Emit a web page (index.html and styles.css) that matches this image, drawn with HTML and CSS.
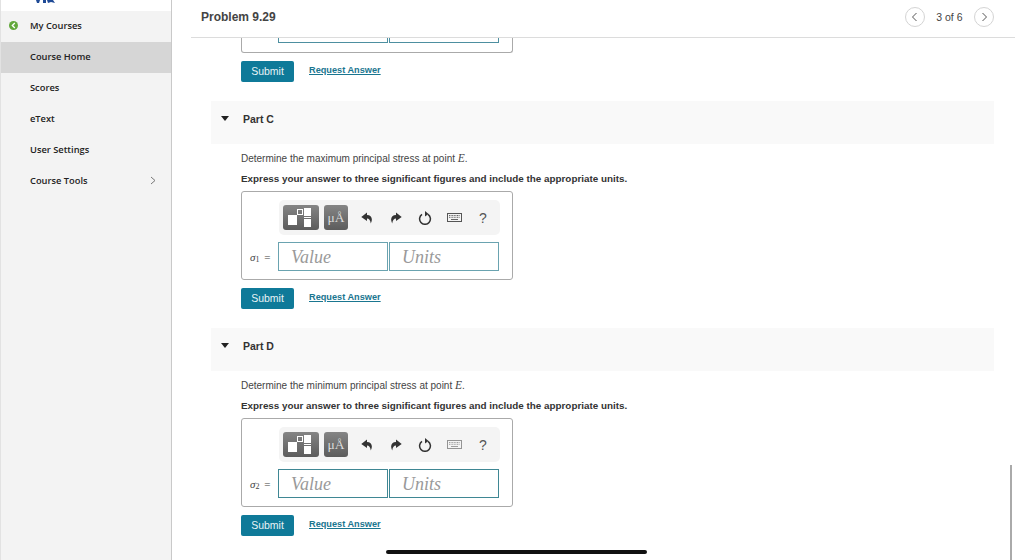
FILE: index.html
```html
<!DOCTYPE html>
<html lang="en">
  <head>
    <meta charset="UTF-8" />
    <meta name="viewport" content="width=device-width, initial-scale=1.0" />
    <title>Problem 9.29</title>
    <link rel="stylesheet" href="styles.css">
  </head>
  <body>
    <svg class="sprite" width="0" height="0">
      <symbol id="undo" viewBox="0 0 12 12">
        <path d="M6 0.5 L0.3 5 L6 9 V6.6 C8 6.6 9.3 8 9.8 11.5 C12.2 6.8 10.4 3.2 6 3.1 Z" />
      </symbol>
      <symbol id="reset" viewBox="0 0 14 14">
        <path d="M4 3.4 A5.4 5.4 0 1 0 10 3.4" fill="none" stroke="#333" stroke-width="1.5" />
        <path d="M7 0 V5.6 L10.6 3 Z" fill="#333" />
      </symbol>
      <symbol id="keyboard" viewBox="0 0 15 9">
        <rect x="0.5" y="0.5" width="14" height="8" fill="#f4f4f4" stroke="#555" />
        <path d="M2 2.5 H13 M2 4.3 H13" stroke="#666" stroke-dasharray="1 0.6" />
        <path d="M4 6.5 H11" stroke="#666" />
      </symbol>
      <symbol id="templates" viewBox="0 0 36 25">
        <rect x="5" y="10" width="9" height="10" fill="#fff" />
        <rect x="14.5" y="4.5" width="5" height="5" fill="none" stroke="#fff" />
        <rect x="21" y="3" width="7" height="8" fill="#fff" />
        <rect x="21" y="12" width="7" height="1" fill="#fff" />
        <rect x="21" y="14" width="7" height="8" fill="#fff" />
      </symbol>
    </svg>

    <div class="app">
      <aside class="sidebar">
        <div class="logo">
          <svg width="24" height="4" viewBox="0 0 24 4">
            <path d="M1 0 L5 0 L4 3 L2 3 Z M8 0 H11 V3 H8 Z M12 0 L18 0 L20 3 L16 2 L13 3 Z" fill="#1f4a96" />
          </svg>
        </div>
        <ul class="nav">
          <li class="nav-back">
            <span class="back-dot">
              <svg width="6" height="8" viewBox="0 0 6 8"><path d="M4.6 1 L1.6 4 L4.6 7" fill="none" stroke="#fff" stroke-width="1.6" /></svg>
            </span>
            <a href="#">My Courses</a>
          </li>
          <li class="active"><a href="#">Course Home</a></li>
          <li><a href="#">Scores</a></li>
          <li><a href="#">eText</a></li>
          <li><a href="#">User Settings</a></li>
          <li>
            <a href="#">Course Tools</a>
            <svg class="chevron" width="6" height="9" viewBox="0 0 6 9"><path d="M1 1 L5 4.5 L1 8" fill="none" stroke="#777" /></svg>
          </li>
        </ul>
      </aside>

      <main class="main">
        <header class="topbar">
          <h2>Problem 9.29</h2>
          <div class="pager">
            <span class="pager-btn">
              <svg width="7" height="10" viewBox="0 0 7 10"><path d="M5.5 1 L1.5 5 L5.5 9" fill="none" stroke="#555" /></svg>
            </span>
            <span class="pager-text">3 of 6</span>
            <span class="pager-btn">
              <svg width="7" height="10" viewBox="0 0 7 10"><path d="M1.5 1 L5.5 5 L1.5 9" fill="none" stroke="#555" /></svg>
            </span>
          </div>
        </header>

        <div class="content">
          <div class="answer-stub">
            <div class="field stub-field"></div>
            <div class="field stub-field"></div>
          </div>
          <div class="actions">
            <button class="submit">Submit</button>
            <a class="request" href="#">Request Answer</a>
          </div>

          <section class="part">
            <div class="part-head"><span class="caret"></span><h3>Part C</h3></div>
            <p class="question">Determine the maximum principal stress at point <i>E</i>.</p>
            <p class="instruction">Express your answer to three significant figures and include the appropriate units.</p>
            <div class="answer">
              <div class="toolbar">
                <span class="tool-btn tool-templates"><svg width="36" height="25"><use href="#templates" /></svg></span>
                <span class="tool-btn tool-symbols">μÅ</span>
                <svg class="tool undo" width="12" height="12"><use href="#undo" /></svg>
                <svg class="tool redo" width="12" height="12"><use href="#undo" /></svg>
                <svg class="tool reset" width="14" height="14"><use href="#reset" /></svg>
                <svg class="tool kbd" width="15" height="9"><use href="#keyboard" /></svg>
                <span class="tool help">?</span>
              </div>
              <div class="answer-row">
                <span class="symbol"><i>σ</i><sub>1</sub> =</span>
                <div class="field"><span class="placeholder">Value</span></div>
                <div class="field"><span class="placeholder">Units</span></div>
              </div>
            </div>
            <div class="actions">
              <button class="submit">Submit</button>
              <a class="request" href="#">Request Answer</a>
            </div>
          </section>

          <section class="part">
            <div class="part-head"><span class="caret"></span><h3>Part D</h3></div>
            <p class="question">Determine the minimum principal stress at point <i>E</i>.</p>
            <p class="instruction">Express your answer to three significant figures and include the appropriate units.</p>
            <div class="answer">
              <div class="toolbar">
                <span class="tool-btn tool-templates"><svg width="36" height="25"><use href="#templates" /></svg></span>
                <span class="tool-btn tool-symbols">μÅ</span>
                <svg class="tool undo" width="12" height="12"><use href="#undo" /></svg>
                <svg class="tool redo" width="12" height="12"><use href="#undo" /></svg>
                <svg class="tool reset" width="14" height="14"><use href="#reset" /></svg>
                <svg class="tool kbd faded" width="15" height="9"><use href="#keyboard" /></svg>
                <span class="tool help">?</span>
              </div>
              <div class="answer-row">
                <span class="symbol"><i>σ</i><sub>2</sub> =</span>
                <div class="field dark"><span class="placeholder">Value</span></div>
                <div class="field dark"><span class="placeholder">Units</span></div>
              </div>
            </div>
            <div class="actions">
              <button class="submit">Submit</button>
              <a class="request" href="#">Request Answer</a>
            </div>
          </section>
        </div>
      </main>
    </div>

    <div class="scroll-thumb"></div>
    <div class="home-bar"></div>
  </body>
</html>
```

FILE: styles.css
```css
* {
  margin: 0;
  padding: 0;
  box-sizing: border-box;
  list-style: none;
  text-decoration: none;
}
html,
body {
  height: 560px;
  overflow: hidden;
  background: #fff;
}
body {
  font-family: "Liberation Sans", Arial, sans-serif;
  color: #333;
}
.sprite {
  position: absolute;
}
.app {
  display: flex;
  height: 560px;
}

/* sidebar */
.sidebar {
  width: 172px;
  flex: none;
  background: #f3f3f3;
  border-right: 1px solid #c9c9c9;
  border-left: 1px solid #e2e2e2;
  font-family: "Open Sans", sans-serif;
  font-size: 9.3px;
  font-weight: 600;
}
.logo {
  height: 11px;
  background: #fff;
  padding-left: 34px;
  line-height: 0;
}
.nav li {
  height: 31px;
  display: flex;
  align-items: center;
  padding: 0 0 2px 29px;
  position: relative;
}
.nav a {
  color: #222;
}
.nav .active {
  background: #d6d6d6;
}
.back-dot {
  position: absolute;
  left: 8px;
  top: 10px;
  width: 9px;
  height: 9px;
  border-radius: 50%;
  background: #63a83c;
  display: flex;
  align-items: center;
  justify-content: center;
}
.back-dot svg {
  width: 5px;
  height: 7px;
}
.chevron {
  position: absolute;
  right: 15px;
  top: 10px;
}

/* main column */
.main {
  flex: 1;
  min-width: 0;
  padding: 0 9px 0 19px;
}
.topbar {
  height: 38px;
  border-bottom: 1px solid #dcdcdc;
  display: flex;
  align-items: center;
  justify-content: space-between;
  padding: 0 21px 4px 10px;
}
.topbar h2 {
  font-size: 12px;
  font-weight: bold;
  color: #444;
}
.pager {
  display: flex;
  align-items: center;
  gap: 11.5px;
}
.pager-btn {
  width: 20px;
  height: 20px;
  border: 1px solid #d4d4d4;
  border-radius: 50%;
  display: flex;
  align-items: center;
  justify-content: center;
}
.pager-text {
  font-size: 10.5px;
  color: #444;
}

.content {
  padding-left: 20px;
  padding-right: 21px;
}
.content > .answer-stub,
.content > .actions {
  margin-left: 30px;
}
.answer-stub {
  width: 272px;
  height: 15px;
  border: 1px solid #aaa;
  border-top: 0;
  border-radius: 0 0 3px 3px;
  display: flex;
  gap: 1px;
  padding-left: 36px;
}
.field {
  width: 110px;
  height: 29px;
  border: 1px solid #6aa3b0;
  background: #fff;
  display: flex;
  align-items: center;
  padding: 2px 0 0 12px;
}
.field.dark {
  border-color: #3f8794;
}
.stub-field {
  height: 5px;
  padding: 0;
  border-color: #4d8fa0;
  border-top: 0;
}
.placeholder {
  font-family: "Liberation Serif", serif;
  font-style: italic;
  font-size: 18px;
  color: #999;
}
.actions {
  display: flex;
  align-items: center;
  height: 21px;
  margin-top: 8px;
  gap: 15px;
}
.submit {
  width: 53px;
  height: 21px;
  border: 0;
  border-radius: 2px;
  padding-bottom: 2px;
  background: #0f7a99;
  color: #e8f3f6;
  font-family: "Liberation Sans", Arial, sans-serif;
  font-size: 10.5px;
}
.request {
  font-size: 9.2px;
  font-weight: bold;
  color: #1a7690;
  text-decoration: underline;
  padding-bottom: 3px;
}

/* parts */
.part {
  margin-top: 19px;
  padding-left: 30px;
}
.part-head {
  height: 43px;
  margin-left: -30px;
  background: #f9f9f9;
  display: flex;
  align-items: center;
  padding-left: 10px;
  padding-bottom: 8px;
}
.caret {
  width: 0;
  height: 0;
  border-left: 4.5px solid transparent;
  border-right: 4.5px solid transparent;
  border-top: 5px solid #222;
  margin-right: 14px;
}
.part-head h3 {
  font-size: 10.5px;
  font-weight: bold;
  color: #333;
}
.question {
  margin-top: 8px;
  font-size: 10px;
  line-height: 14px;
  color: #444;
}
.question i {
  font-family: "Liberation Serif", serif;
  font-size: 11.5px;
  line-height: 0;
}
.instruction {
  margin-top: 6px;
  font-size: 9.85px;
  line-height: 14px;
  font-weight: bold;
  color: #333;
}
.answer {
  width: 272px;
  height: 89px;
  margin-top: 5px;
  border: 1px solid #aaa;
  border-radius: 3px;
  padding: 8px 13px 0 8px;
}
.toolbar {
  width: 221px;
  height: 35px;
  margin-left: 29px;
  background: #f4f4f4;
  border-radius: 5px;
  display: flex;
  align-items: center;
  padding-left: 4px;
}
.tool-btn {
  height: 25px;
  border-radius: 3px;
  background: linear-gradient(#858585, #5c5c5c);
  color: #fff;
  display: flex;
  align-items: center;
  justify-content: center;
}
.tool-templates {
  width: 36px;
}
.tool-symbols {
  width: 24px;
  margin-left: 5px;
  font-family: "Liberation Serif", serif;
  font-size: 13.5px;
  color: #ddd;
}
.tool {
  flex: none;
}
.undo {
  margin-left: 13px;
  fill: #333;
}
.redo {
  margin-left: 17px;
  fill: #333;
  transform: scaleX(-1);
}
.reset {
  margin-left: 16px;
}
.kbd {
  margin-left: 15px;
}
.faded {
  opacity: 0.6;
}
.help {
  margin-left: 17px;
  font-size: 14px;
  color: #555;
}
.answer-row {
  display: flex;
  align-items: center;
  gap: 1px;
  margin-top: 7px;
}
.symbol {
  width: 27px;
  flex: none;
  font-family: "Liberation Serif", serif;
  font-size: 11px;
  word-spacing: 2px;
  color: #444;
}
.symbol sub {
  font-size: 8px;
  line-height: 0;
  vertical-align: -1px;
}

/* overlays */
.scroll-thumb {
  position: absolute;
  left: 1010px;
  top: 465px;
  width: 2px;
  height: 95px;
  background: #aaa;
}
.home-bar {
  position: absolute;
  left: 386px;
  top: 550px;
  width: 261px;
  height: 4px;
  border-radius: 2px;
  background: #111;
}
```
